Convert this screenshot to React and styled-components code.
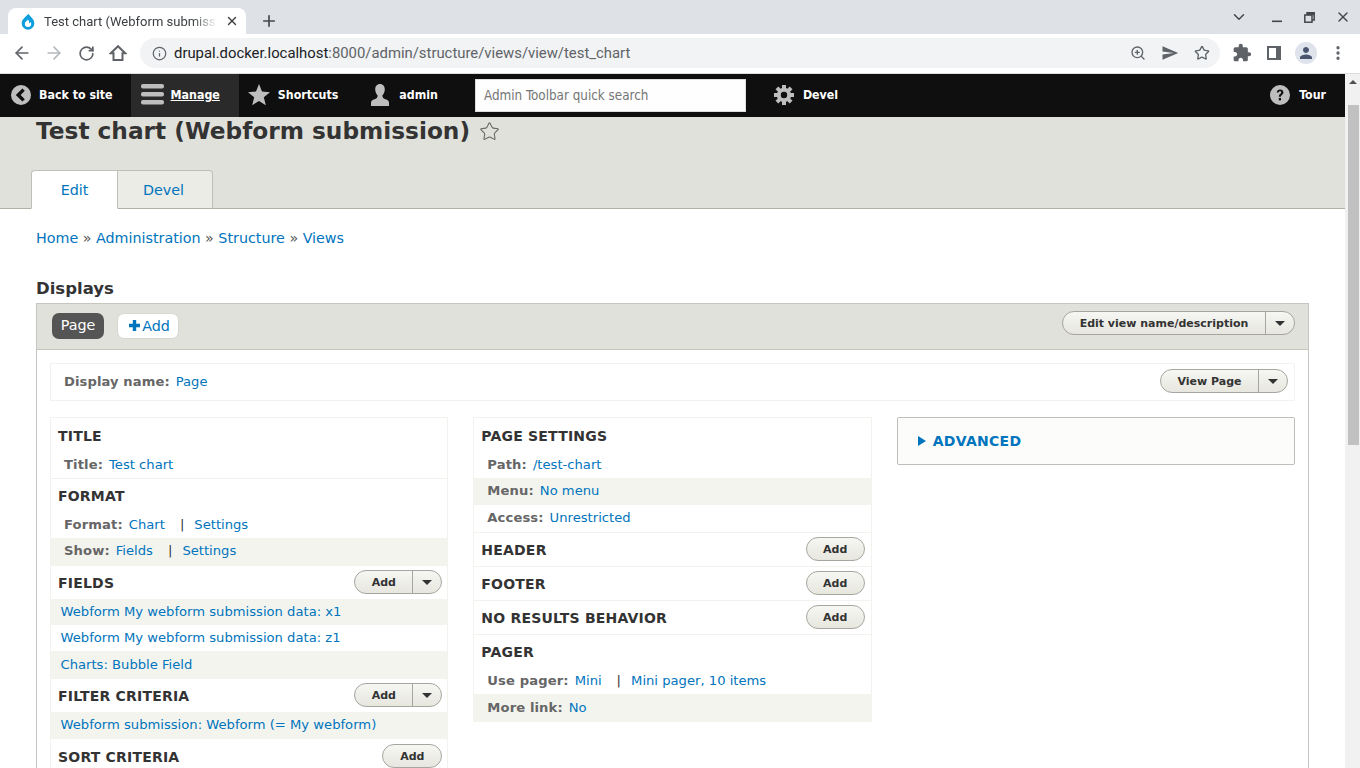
import React from 'react';
import styled, { createGlobalStyle } from 'styled-components';
import { ArrowLeft, ArrowRight, RotateCw, Info, ZoomIn, Star, X, Plus, ChevronDown, EllipsisVertical } from 'lucide-react';
import { MdExtension, MdSend, MdPerson } from 'react-icons/md';

const GlobalStyle = createGlobalStyle`
  html, body { margin: 0; padding: 0; height: 100%; overflow: hidden; background: #fff; }
  #root { height: 100%; }
  * { box-sizing: border-box; }
`;

const Window = styled.div`
  width: 1360px;
  height: 768px;
  display: flex;
  flex-direction: column;
  overflow: hidden;
  font-family: "DejaVu Sans", sans-serif;
`;

/* browser chrome */
const TabStrip = styled.div`
  height: 34px;
  flex: none;
  background: #dee1e6;
  display: flex;
  align-items: flex-end;
  padding-left: 8px;
  color: #45474a;
`;
const BrowserTab = styled.div`
  width: 238px;
  height: 26px;
  margin-top: 8px;
  background: #fff;
  border-radius: 8px 8px 0 0;
  display: flex;
  align-items: center;
  padding: 0 7px 0 12px;
  gap: 8px;
  font: 13px "Roboto", sans-serif;
  color: #3c4043;
`;
const TabTitle = styled.span`
  flex: 1;
  white-space: nowrap;
  overflow: hidden;
  -webkit-mask-image: linear-gradient(to right, #000 86%, transparent);
  mask-image: linear-gradient(to right, #000 86%, transparent);
`;
const NewTab = styled.div`
  width: 24px;
  height: 26px;
  margin-left: 11px;
  display: flex;
  align-items: center;
  justify-content: center;
`;
const WindowControls = styled.div`
  margin-left: auto;
  height: 34px;
  display: flex;
  align-items: center;
  padding-right: 1px;
  color: #45474a;
`;
const ControlSlot = styled.span`
  width: ${p => p.$w}px;
  display: flex;
  justify-content: center;
  align-items: center;
`;
const BrowserBar = styled.div`
  height: 40px;
  flex: none;
  background: #fff;
  border-bottom: 1px solid #dadce0;
  display: flex;
  align-items: center;
  padding: 0 0 1px 6px;
  color: #5f6368;
`;
const IconSlot = styled.span`
  width: 32px;
  display: flex;
  justify-content: center;
  align-items: center;
`;
const NavButtons = styled.div`
  display: flex;
  align-items: center;
  width: 134px;
`;
const UrlPill = styled.div`
  width: 1080px;
  height: 30px;
  background: #f1f3f4;
  border-radius: 15px;
  display: flex;
  align-items: center;
  padding: 0 10px 0 12px;
  gap: 7px;
  font: 14.87px "Roboto", sans-serif;
  color: #5f6368;
  b { font-weight: 400; color: #202124; }
`;
const UrlText = styled.span`
  flex: 1;
`;
const PillIcons = styled.div`
  display: flex;
  align-items: center;
  gap: 15px;
`;
const Extensions = styled.div`
  display: flex;
  align-items: center;
  margin-left: 6px;
`;
const SidePanel = styled.span`
  width: 14px;
  height: 14px;
  border: 2px solid #5f6368;
  border-right-width: 5px;
`;
const Avatar = styled.span`
  width: 22px;
  height: 22px;
  border-radius: 50%;
  background: #dfe3eb;
  display: flex;
  align-items: center;
  justify-content: center;
  color: #4a5670;
`;

/* page + scrollbar */
const Viewport = styled.div`
  flex: 1;
  min-height: 0;
  display: flex;
`;
const Page = styled.div`
  width: 1345px;
  display: flex;
  flex-direction: column;
  overflow: hidden;
`;
const ScrollTrack = styled.div`
  width: 15px;
  background: #f1f1f1;
  display: flex;
  flex-direction: column;
  align-items: center;
`;
const ScrollArrow = styled.span`
  margin-top: 6px;
  width: 0;
  height: 0;
  border-left: 4px solid transparent;
  border-right: 4px solid transparent;
  border-bottom: 4px solid #505050;
`;
const ScrollThumb = styled.span`
  margin-top: 21px;
  margin-left: 2px;
  width: 11px;
  height: 340px;
  background: #c1c1c1;
`;

/* admin toolbar */
const Toolbar = styled.nav`
  height: 43px;
  flex: none;
  background: #0f0f0f;
  display: flex;
  align-items: stretch;
  font: bold 12.3px "DejaVu Sans Condensed", "DejaVu Sans", sans-serif;
  color: #fff;
`;
const ToolItem = styled.a`
  display: flex;
  align-items: center;
  gap: ${p => p.$gap || 8}px;
  padding: 0 ${p => p.$pr}px 2px ${p => p.$pl}px;
  margin-left: ${p => (p.$auto ? 'auto' : '0')};
  background: ${p => (p.$active ? '#2a2a2a' : 'transparent')};
  text-decoration: ${p => (p.$active ? 'underline' : 'none')};
  svg { display: block; flex: none; }
`;
const QuickSearch = styled.div`
  width: 271px;
  height: 33px;
  margin: 5px 0 0 18px;
  background: #fefefe;
  border: 1px solid #ddd;
  display: flex;
  align-items: center;
  padding-left: 8px;
  font: 13.33px "DejaVu Sans Condensed", "DejaVu Sans", sans-serif;
  color: #757575;
`;

/* page header */
const PageHeader = styled.header`
  height: 92px;
  flex: none;
  background: #e1e1db;
  border-bottom: 1px solid #b0b0a8;
  padding: 0 36px 0 31px;
  display: flex;
  flex-direction: column;
  justify-content: space-between;
`;
const TitleRow = styled.div`
  display: flex;
  align-items: center;
  gap: 9px;
  margin: 0 0 0 5px;
  height: 28px;
`;
const PageTitle = styled.h1`
  margin: 0;
  font-size: 23.25px;
  font-weight: bold;
  line-height: 28px;
  color: #333;
`;
const Tabs = styled.div`
  display: flex;
  margin-bottom: -1px;
`;
const Tab = styled.a`
  width: ${p => p.$w}px;
  height: 39px;
  display: flex;
  align-items: center;
  justify-content: center;
  padding-right: ${p => (p.$active ? 0 : 3)}px;
  font-size: 14.3px;
  color: #0074bd;
  background: ${p => (p.$active ? '#fff' : '#ecece6')};
  border: 1px solid #bfbfba;
  border-left-width: ${p => (p.$active ? 1 : 0)}px;
  border-bottom-color: ${p => (p.$active ? '#fff' : '#b0b0a8')};
  border-radius: ${p => (p.$active ? '4px 0 0 0' : '0 4px 0 0')};
`;

/* content */
const Content = styled.main`
  padding: 0 36px;
`;
const Breadcrumb = styled.div`
  margin-top: 19px;
  height: 20px;
  line-height: 20px;
  font-size: 14.3px;
  color: #555;
  display: flex;
  gap: 4.5px;
`;
const Link = styled.a`
  color: #0074bd;
  text-decoration: none;
  white-space: nowrap;
`;
const SectionHeading = styled.h2`
  margin: 31px 0 0;
  height: 24px;
  line-height: 20px;
  font-size: 16.5px;
  font-weight: bold;
  color: #333;
`;
const DisplaysBox = styled.section`
  border: 1px solid #c6c6c0;
  border-bottom: 0;
  height: 600px;
`;
const DisplaysTop = styled.div`
  height: 46px;
  background: #e1e1db;
  border-bottom: 1px solid #c6c6c0;
  display: flex;
  align-items: center;
  padding: 0 13px 2px 15px;
`;
const PagePill = styled.span`
  width: 52px;
  height: 26px;
  border-radius: 7px;
  background: #555;
  color: #fff;
  font-size: 14.3px;
  padding-bottom: 1px;
  display: flex;
  align-items: center;
  justify-content: center;
`;
const AddPill = styled.a`
  width: 62px;
  height: 26px;
  margin: 1px 0 0 13px;
  border-radius: 7px;
  background: #fff;
  border: 1px solid #d8d8d2;
  color: #0074bd;
  font-size: 14.3px;
  padding: 0 0 1px 3px;
  display: flex;
  align-items: center;
  justify-content: center;
  gap: 2px;
`;
const DropButton = styled.div`
  width: ${p => p.$w}px;
  height: 24px;
  margin-left: ${p => (p.$auto ? 'auto' : '0')};
  margin-top: ${p => p.$top || 0}px;
  margin-bottom: ${p => p.$lift || 0}px;
  flex: none;
  border: 1px solid #a6a6a0;
  border-radius: 12px;
  background: linear-gradient(to bottom, #f6f6f3, #e7e7df);
  display: flex;
  font-size: 11px;
  font-weight: bold;
  letter-spacing: 0;
  text-transform: none;
  color: #333;
`;
const DropLabel = styled.span`
  flex: 1;
  display: flex;
  align-items: center;
  justify-content: center;
  padding-top: ${p => p.$pt || 0}px;
`;
const DropArrow = styled.span`
  width: 29px;
  border-left: 1px solid #a6a6a0;
  display: flex;
  align-items: center;
  justify-content: center;
  &::after {
    content: '';
    border-left: 5px solid transparent;
    border-right: 5px solid transparent;
    border-top: 5px solid #333;
  }
`;
const DisplayName = styled.div`
  height: 38px;
  margin: 13px 13px 16px;
  border: 1px solid #f2f2ee;
  display: flex;
  align-items: center;
  padding: 0 6px 2px 13px;
  font-size: 13.1px;
`;
const Label = styled.span`
  font-weight: bold;
  color: #666;
  margin-right: 6px;
  letter-spacing: 0.1px;
`;
const Columns = styled.div`
  display: grid;
  grid-template-columns: repeat(3, 1fr);
  gap: 25px;
  padding: 0 13px;
  align-items: start;
`;
const Bucket = styled.div`
  border: 1px solid #f2f2ee;
  border-bottom: 0;
  font-size: 13.15px;
`;
const BucketHead = styled.div`
  height: ${p => p.$h}px;
  display: flex;
  align-items: center;
  justify-content: space-between;
  padding: ${p => (p.$low ? 2 : 0)}px ${p => p.$pr || 6}px 0 7px;
  border-top: ${p => (p.$line ? '1px solid #f2f2ee' : '0')};
  font-size: 14px;
  font-weight: bold;
  letter-spacing: 0.2px;
  text-transform: uppercase;
  color: #333;
`;
const Row = styled.div`
  height: ${p => p.$h || 26}px;
  display: flex;
  align-items: center;
  padding: 0 0 ${p => p.$pb ?? (p.$alt ? 3 : 2)}px ${p => (p.$link ? 9.5 : 13)}px;
  background: ${p => (p.$alt ? '#f4f4ef' : 'transparent')};
  white-space: nowrap;
`;
const Pipe = styled.span`
  margin: 0 10px 0 15px;
  color: #333;
`;
const AdvancedBox = styled.div`
  height: 48px;
  border: 1px solid #bfbfba;
  border-radius: 2px;
  background: #fcfcfa;
  padding: 0 20px;
`;
const AdvancedTitle = styled.div`
  height: 46px;
  display: flex;
  align-items: center;
  gap: 7px;
  font-size: 14px;
  font-weight: bold;
  letter-spacing: 0.3px;
  color: #0074bd;
  &::before {
    content: '';
    border-top: 5px solid transparent;
    border-bottom: 5px solid transparent;
    border-left: 8px solid #0074bd;
  }
`;

const icon = '#bebebe';

const DrupalDrop = () => (
  <svg width="16" height="17" viewBox="0 0 16 17">
    <path d="M8.300 .6c.6 2.400 6 4.800 6 9.800a6.300 6.300 0 0 1-12.600 0C1.700 5.400 7.700 3 8.300 .6z" fill="#0d9ede" />
    <path d="M8 6.500c-1 1.300-3.200 2.300-3.200 4.500 0 1.700 1.300 3.100 3.200 3.100s3.200-1.400 3.200-3.100c0-.9-.4-1.500-.8-2-.3.800-1 1.300-1.400 1.300.5-1.500-.3-2.900-1-3.800z" fill="#fff" />
  </svg>
);
const HomeOutline = () => (
  <svg width="18" height="18" viewBox="0 0 18 18">
    <path d="M9 2.200 1.800 9.200h2.700v6.800h9V9.200h2.700z" fill="none" stroke="#5f6368" strokeWidth="2" strokeLinejoin="miter" />
  </svg>
);
const MinimizeBar = () => (
  <svg width="10" height="12" viewBox="0 0 10 12"><rect y="9.500" width="10" height="1.600" fill="#45474a" /></svg>
);
const RestoreGlyph = () => (
  <svg width="11" height="11" viewBox="0 0 11 11">
    <path d="M3 3V.8h7.200V8H8" fill="none" stroke="#45474a" strokeWidth="1.500" />
    <rect x=".8" y="3" width="7.200" height="7.200" fill="none" stroke="#45474a" strokeWidth="1.500" />
    <rect x="3" y=".8" width="7.200" height="2.400" fill="#45474a" />
  </svg>
);
const BackIcon = () => (
  <svg width="20" height="20" viewBox="0 0 20 20">
    <circle cx="10" cy="10" r="10" fill={icon} />
    <path d="M12.600 4.600 7.200 10l5.400 5.400" fill="none" stroke="#0f0f0f" strokeWidth="3.400" />
  </svg>
);
const MenuIcon = () => (
  <svg width="23" height="21" viewBox="0 0 23 21">
    <rect y="0" width="23" height="4.400" rx="2" fill={icon} />
    <rect y="8" width="23" height="4.400" rx="2" fill={icon} />
    <rect y="16" width="23" height="4.400" rx="2" fill={icon} />
  </svg>
);
const StarIcon = () => (
  <svg width="22" height="22" viewBox="0 0 22 22">
    <path d="M11 0l3 7.600 8 .6-6.200 5.100 2 7.900L11 16.900 4.200 21.200l2-7.900L0 8.200l8-.6z" fill={icon} />
  </svg>
);
const PersonIcon = () => (
  <svg width="22" height="22" viewBox="0 0 22 22">
    <path d="M11 0c3 0 4.800 2.300 4.800 5.400 0 2.600-1.300 4.700-2.500 6 .1 2.100 1.200 3 3.200 3.800 2 .8 3.500 1.500 3.500 3.300V22H2v-3.500c0-1.800 1.500-2.500 3.500-3.300 2-.8 3.100-1.700 3.200-3.800-1.200-1.300-2.500-3.400-2.500-6C6.200 2.300 8 0 11 0z" fill={icon} />
  </svg>
);
const GearIcon = () => (
  <svg width="20" height="20" viewBox="0 0 20 20">
    <circle cx="10" cy="10" r="5.200" fill="none" stroke={icon} strokeWidth="4" />
    {[0, 45, 90, 135, 180, 225, 270, 315].map(a => (
      <rect key={a} x="8" y="0" width="4" height="4.500" fill={icon} transform={`rotate(${a} 10 10)`} />
    ))}
  </svg>
);
const HelpIcon = () => (
  <svg width="20" height="20" viewBox="0 0 20 20">
    <circle cx="10" cy="10" r="10" fill={icon} />
    <path d="M6.800 7.600C6.900 5.700 8.200 4.500 10.100 4.500c2 0 3.300 1.200 3.300 2.900 0 2.300-2.500 2.400-2.500 4.300H8.900c0-3 2.300-3 2.300-4.300 0-.7-.5-1.100-1.200-1.100-.8 0-1.200.5-1.300 1.300z" fill="#0f0f0f" />
    <rect x="8.800" y="13" width="2.200" height="2.400" fill="#0f0f0f" />
  </svg>
);
const BoldPlus = () => (
  <svg width="11" height="11" viewBox="0 0 11 11">
    <path d="M3.800 0h3.400v3.800H11v3.400H7.200V11H3.800V7.200H0V3.800h3.800z" fill="#0074bd" />
  </svg>
);

// left column buttons sit a pixel lower than the middle column ones
const AddDrop = () => (
  <DropButton $w={88} $lift={1}>
    <DropLabel>Add</DropLabel>
    <DropArrow />
  </DropButton>
);
const AddSingle = ({ w = 59, lift = 2, pt = 2 }) => (
  <DropButton $w={w} $lift={lift}>
    <DropLabel $pt={pt}>Add</DropLabel>
  </DropButton>
);

export default function App() {
  return (
    <Window>
      <GlobalStyle />
      <TabStrip>
        <BrowserTab>
          <DrupalDrop />
          <TabTitle>Test chart (Webform submission)</TabTitle>
          <X size={14} strokeWidth={2.4} />
        </BrowserTab>
        <NewTab><Plus size={18} strokeWidth={2.2} /></NewTab>
        <WindowControls>
          <ControlSlot $w={43}><ChevronDown size={18} strokeWidth={2} /></ControlSlot>
          <ControlSlot $w={33}><MinimizeBar /></ControlSlot>
          <ControlSlot $w={33}><RestoreGlyph /></ControlSlot>
          <ControlSlot $w={33}><X size={16} strokeWidth={2} /></ControlSlot>
        </WindowControls>
      </TabStrip>
      <BrowserBar>
        <NavButtons>
          <IconSlot><ArrowLeft size={20} strokeWidth={2} /></IconSlot>
          <IconSlot><ArrowRight size={20} strokeWidth={2} color="#b5b8bc" /></IconSlot>
          <IconSlot><RotateCw size={17} strokeWidth={2.4} /></IconSlot>
          <IconSlot><HomeOutline /></IconSlot>
        </NavButtons>
        <UrlPill>
          <Info size={15} strokeWidth={2} />
          <UrlText><b>drupal.docker.localhost</b>:8000/admin/structure/views/view/test_chart</UrlText>
          <PillIcons>
            <ZoomIn size={16} strokeWidth={2} />
            <MdSend size={18} />
            <Star size={16} strokeWidth={2} />
          </PillIcons>
        </UrlPill>
        <Extensions>
          <IconSlot><MdExtension size={20} /></IconSlot>
          <IconSlot><SidePanel /></IconSlot>
          <IconSlot><Avatar><MdPerson size={18} /></Avatar></IconSlot>
          <IconSlot><EllipsisVertical size={18} strokeWidth={2.4} /></IconSlot>
        </Extensions>
      </BrowserBar>
      <Viewport>
        <Page>
          <Toolbar>
            <ToolItem $pl={11} $pr={18}><BackIcon />Back to site</ToolItem>
            <ToolItem $pl={10} $pr={19} $gap={7} $active><MenuIcon />Manage</ToolItem>
            <ToolItem $pl={9} $pr={20}><StarIcon />Shortcuts</ToolItem>
            <ToolItem $pl={11} $pr={19}><PersonIcon />admin</ToolItem>
            <QuickSearch>Admin Toolbar quick search</QuickSearch>
            <ToolItem $pl={28} $pr={0} $gap={9}><GearIcon />Devel</ToolItem>
            <ToolItem $pl={0} $pr={19} $gap={9} $auto><HelpIcon />Tour</ToolItem>
          </Toolbar>
          <PageHeader>
            <TitleRow>
              <PageTitle>Test chart (Webform submission)</PageTitle>
              <Star size={21} strokeWidth={1.2} color="#666" />
            </TitleRow>
            <Tabs>
              <Tab $w={87} $active>Edit</Tab>
              <Tab $w={95}>Devel</Tab>
            </Tabs>
          </PageHeader>
          <Content>
            <Breadcrumb>
              <Link>Home</Link>»<Link>Administration</Link>»<Link>Structure</Link>»<Link>Views</Link>
            </Breadcrumb>
            <SectionHeading>Displays</SectionHeading>
            <DisplaysBox>
              <DisplaysTop>
                <PagePill>Page</PagePill>
                <AddPill><BoldPlus />Add</AddPill>
                <DropButton $w={233} $auto $top={-5}>
                  <DropLabel>Edit view name/description</DropLabel>
                  <DropArrow />
                </DropButton>
              </DisplaysTop>
              <DisplayName>
                <Label>Display name:</Label><Link>Page</Link>
                <DropButton $w={128} $auto>
                  <DropLabel>View Page</DropLabel>
                  <DropArrow />
                </DropButton>
              </DisplayName>
              <Columns>
                <Bucket>
                  <BucketHead $h={33} $low>Title</BucketHead>
                  <Row $h={27} $pb={0}><Label>Title:</Label><Link>Test chart</Link></Row>
                  <BucketHead $h={33} $line $low>Format</BucketHead>
                  <Row $h={27} $pb={0}><Label>Format:</Label><Link>Chart</Link><Pipe>|</Pipe><Link>Settings</Link></Row>
                  <Row $alt $h={28}><Label>Show:</Label><Link>Fields</Link><Pipe>|</Pipe><Link>Settings</Link></Row>
                  <BucketHead $h={33} $pr={5}>Fields<AddDrop /></BucketHead>
                  <Row $link $alt $pb={1}>
                    <Link>Webform My webform submission data: x1</Link>
                  </Row>
                  <Row $link><Link>Webform My webform submission data: z1</Link></Row>
                  <Row $link $alt $h={28} $pb={1}><Link>Charts: Bubble Field</Link></Row>
                  <BucketHead $h={33} $pr={5}>Filter criteria<AddDrop /></BucketHead>
                  <Row $link $alt $h={27}><Link>Webform submission: Webform (= My webform)</Link></Row>
                  <BucketHead $h={33} $low $pr={5}>Sort criteria<AddSingle w={60} lift={1} pt={0} /></BucketHead>
                </Bucket>
                <Bucket>
                  <BucketHead $h={33} $low>Page settings</BucketHead>
                  <Row $h={27} $pb={0}><Label>Path:</Label><Link>/test-chart</Link></Row>
                  <Row $alt $h={27}><Label>Menu:</Label><Link>No menu</Link></Row>
                  <Row $h={27}><Label>Access:</Label><Link>Unrestricted</Link></Row>
                  <BucketHead $h={34} $line>Header<AddSingle /></BucketHead>
                  <BucketHead $h={34} $line>Footer<AddSingle /></BucketHead>
                  <BucketHead $h={34} $line>No results behavior<AddSingle /></BucketHead>
                  <BucketHead $h={33} $line $low>Pager</BucketHead>
                  <Row $h={27} $pb={1}><Label>Use pager:</Label><Link>Mini</Link><Pipe>|</Pipe><Link>Mini pager, 10 items</Link></Row>
                  <Row $alt $h={28} $pb={2}><Label>More link:</Label><Link>No</Link></Row>
                </Bucket>
                <AdvancedBox>
                  <AdvancedTitle>ADVANCED</AdvancedTitle>
                </AdvancedBox>
              </Columns>
            </DisplaysBox>
          </Content>
        </Page>
        <ScrollTrack>
          <ScrollArrow />
          <ScrollThumb />
        </ScrollTrack>
      </Viewport>
    </Window>
  );
}
